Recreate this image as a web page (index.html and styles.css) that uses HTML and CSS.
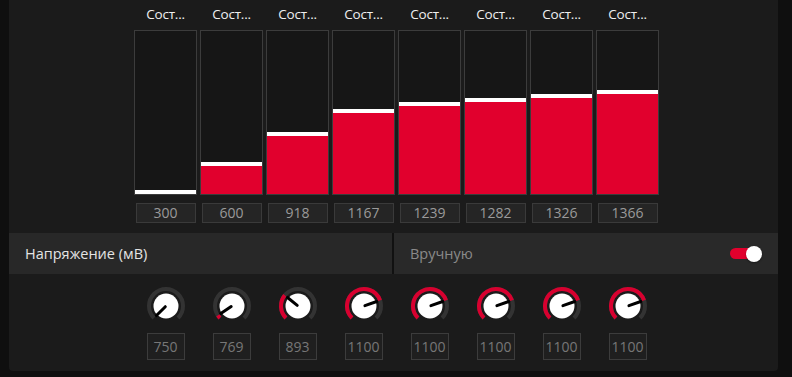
FILE: index.html
```html
<!DOCTYPE html>
<html lang="ru">
<head>
    <meta charset="UTF-8">
    <meta name="viewport" content="width=device-width, initial-scale=1.0">
    <title>Состояния</title>
    <link rel="stylesheet" href="styles.css">
</head>
<body>
    <div class="panel">
        <div class="states" id="states"></div>
        <div class="section-header">
            <div class="section-title">Напряжение (мВ)</div>
            <div class="section-mode">
                <span>Вручную</span>
                <div class="toggle on"><div class="toggle-knob"></div></div>
            </div>
        </div>
        <div class="knobs" id="knobs"></div>
    </div>

    <script>
        const clocks = [300, 600, 918, 1167, 1239, 1282, 1326, 1366];
        const volts = [750, 769, 893, 1100, 1100, 1100, 1100, 1100];

        const CLOCK_MIN = 300, CLOCK_MAX = 2000, BAR_INNER = 163;
        const VOLT_MIN = 750, VOLT_MAX = 1210;

        function point(r, deg) {
            const a = deg * Math.PI / 180;
            return (20 + r * Math.sin(a)).toFixed(2) + ' ' + (20 - r * Math.cos(a)).toFixed(2);
        }

        function arc(r, from, to) {
            const large = (to - from) > 180 ? 1 : 0;
            return 'M ' + point(r, from) + ' A ' + r + ' ' + r + ' 0 ' + large + ' 1 ' + point(r, to);
        }

        function knobSvg(value) {
            const frac = Math.max(0, Math.min(1, (value - VOLT_MIN) / (VOLT_MAX - VOLT_MIN)));
            const angle = -135 + 270 * frac;
            const red = frac > 0 ? `<path d="${arc(17, -135, angle)}" class="ring-value"/>` : '';
            return `
                <svg class="knob" width="40" height="40" viewBox="0 0 40 40">
                    <path d="${arc(17, -135, 135)}" class="ring-track"/>
                    ${red}
                    <circle cx="20" cy="20" r="12.5" fill="#fff"/>
                    <path d="M ${point(1, angle)} L ${point(13.5, angle)}" class="pointer"/>
                </svg>`;
        }

        let statesHTML = '';
        clocks.forEach(v => {
            const h = 4 + (v - CLOCK_MIN) / (CLOCK_MAX - CLOCK_MIN) * (BAR_INNER - 4);
            statesHTML += `
                <div class="state">
                    <div class="state-label">Сост...</div>
                    <div class="bar"><div class="bar-fill" style="height: ${h.toFixed(1)}px"></div></div>
                    <div class="value-box">${v}</div>
                </div>`;
        });
        document.getElementById('states').innerHTML = statesHTML;

        let knobsHTML = '';
        volts.forEach(v => {
            knobsHTML += `
                <div class="knob-col">
                    ${knobSvg(v)}
                    <div class="knob-value">${v}</div>
                </div>`;
        });
        document.getElementById('knobs').innerHTML = knobsHTML;
    </script>
</body>
</html>
```

FILE: styles.css
```css
body {
    margin: 0;
    background: #0f0f0f;
    font-family: "Open Sans", "Noto Sans", Arial, sans-serif;
}
.panel {
    margin-left: 9px;
    width: 769px;
    height: 371px;
    background: #1b1b1b;
    border-radius: 0 0 4px 4px;
    box-sizing: border-box;
}
.states {
    display: flex;
    gap: 3px;
    padding-left: 125px;
}
.state {
    width: 63px;
    display: flex;
    flex-direction: column;
    align-items: center;
}
.state-label {
    height: 30px;
    line-height: 28px;
    font-size: 13.5px;
    color: #f0f0f0;
    letter-spacing: -0.2px;
}
.bar {
    width: 63px;
    height: 165px;
    box-sizing: border-box;
    border: 1px solid #3c3c3c;
    background: #161616;
    display: flex;
    flex-direction: column;
    justify-content: flex-end;
}
.bar-fill {
    background: #e1002d;
    border-top: 4px solid #fff;
    box-sizing: border-box;
}
.value-box {
    margin-top: 8px;
    width: 60px;
    height: 20px;
    box-sizing: border-box;
    border: 1px solid #3a3a3a;
    background: #252525;
    color: #9a9a9a;
    font-size: 14px;
    line-height: 18px;
    text-align: center;
}
.section-header {
    margin-top: 10px;
    height: 41px;
    display: flex;
    gap: 2px;
    background: #111;
}
.section-title {
    width: 383px;
    background: #282828;
    color: #e4e4e4;
    font-size: 14.5px;
    line-height: 41px;
    padding-left: 16px;
    box-sizing: border-box;
}
.section-mode {
    flex: 1;
    background: #292929;
    color: #8a8a8a;
    font-size: 14.5px;
    padding: 0 16px;
    display: flex;
    align-items: center;
    justify-content: space-between;
}
.toggle {
    width: 32px;
    height: 16px;
    position: relative;
}
.toggle::before {
    content: "";
    position: absolute;
    left: 0;
    top: 2px;
    width: 27px;
    height: 11px;
    border-radius: 6px;
    background: #e1002d;
}
.toggle-knob {
    position: absolute;
    right: 0;
    top: 0;
    width: 16px;
    height: 16px;
    border-radius: 50%;
    background: #fff;
    box-shadow: 0 1px 2px rgba(0,0,0,0.4);
}
.knobs {
    display: flex;
    gap: 3px;
    padding-left: 125px;
    margin-top: 12px;
}
.knob-col {
    width: 63px;
    display: flex;
    flex-direction: column;
    align-items: center;
}
.knob {
    display: block;
}
.ring-track {
    fill: none;
    stroke: #333;
    stroke-width: 4;
}
.ring-value {
    fill: none;
    stroke: #d8002f;
    stroke-width: 4;
}
.pointer {
    stroke: #000;
    stroke-width: 3;
    stroke-linecap: round;
}
.knob-value {
    margin-top: 7px;
    width: 38px;
    height: 27px;
    box-sizing: border-box;
    border: 1px solid #3c3c3c;
    background: #1f1f1f;
    color: #777;
    font-size: 14px;
    line-height: 25px;
    text-align: center;
}
```
